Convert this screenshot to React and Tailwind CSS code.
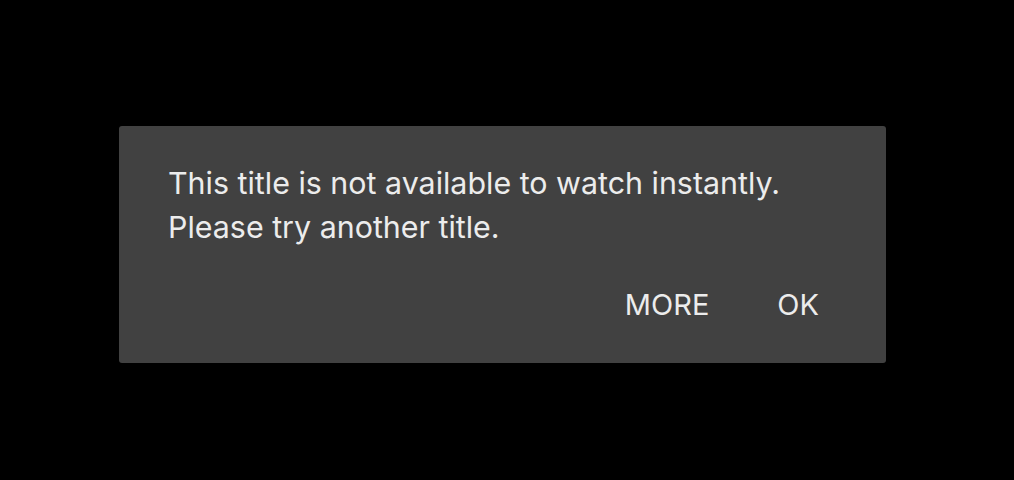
export default function App() {
  return (
    <div className="w-[1014px] h-[480px] bg-black flex flex-col pt-[126px] pl-[119px]" style={{ fontFamily: "Inter, 'Noto Sans', sans-serif" }}>
      <div className="w-[767px] h-[237px] bg-[#414141] rounded-[3px] flex flex-col pl-[49px] pr-[67px] pt-[35px]">
        <p className="text-[#ececec] text-[30.4px] leading-[44px]">
          This title is not available to watch instantly.
          <br />
          Please try another title.
        </p>
        <div className="flex justify-end gap-[68px] mt-[41px] text-[#ececec] text-[29px] leading-[30px]">
          <span>MORE</span>
          <span>OK</span>
        </div>
      </div>
    </div>
  );
}
